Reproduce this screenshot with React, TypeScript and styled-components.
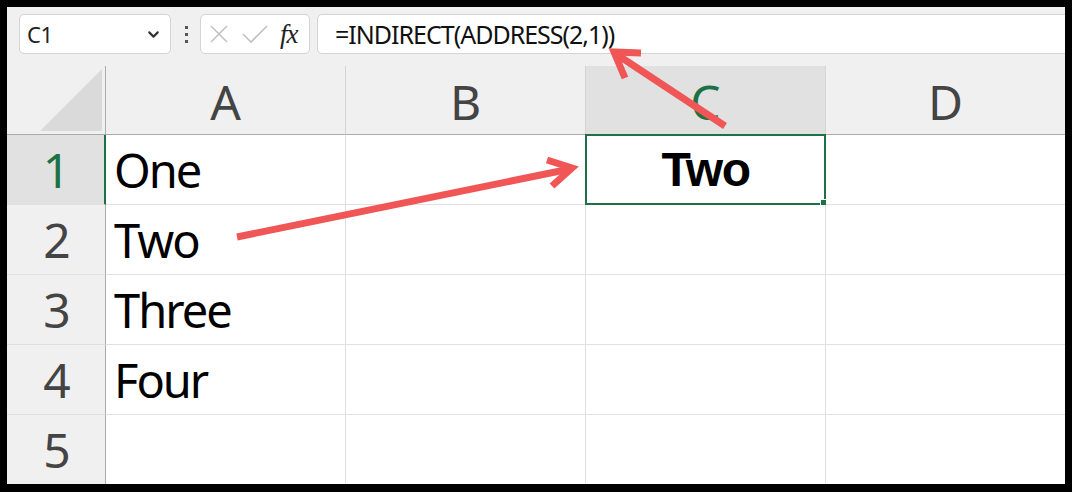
import styled, { createGlobalStyle } from 'styled-components';
import { ChevronDown } from 'lucide-react';

const GlobalStyle = createGlobalStyle`
  html, body {
    margin: 0;
    padding: 0;
    background: #000;
  }
  * {
    box-sizing: border-box;
  }
`;

const GREEN = '#1e7145';
const UI_FONT = `"Noto Sans", "Open Sans", sans-serif`;

const Frame = styled.div`
  position: relative;
  width: 1072px;
  height: 492px;
  padding: 7px 7px 8px 7px;
  background: #000;
  overflow: hidden;
  font-family: ${UI_FONT};
`;

const Sheet = styled.div`
  display: flex;
  flex-direction: column;
  width: 100%;
  height: 100%;
  background: #f0f0f0;
  overflow: hidden;
`;

const Toolbar = styled.div`
  display: flex;
  align-items: center;
  height: 59px;
  padding: 7px 0 12px 12px;
  flex-shrink: 0;
`;

const NameBox = styled.div`
  display: flex;
  align-items: center;
  justify-content: space-between;
  width: 152px;
  height: 40px;
  padding: 0 8px 0 7px;
  background: #fff;
  border: 1px solid #d4d4d4;
  border-radius: 5px;
  font-size: 22px;
  letter-spacing: -0.5px;
  color: #222;
`;

const Dots = styled.div`
  display: flex;
  flex-direction: column;
  gap: 4px;
  margin: 0 12px 0 14px;

  span {
    display: block;
    width: 3px;
    height: 3px;
    background: #555;
  }
`;

const FuncBox = styled.div`
  display: flex;
  align-items: center;
  width: 110px;
  height: 40px;
  padding: 0 0 0 8px;
  gap: 13px;
  background: #fff;
  border: 1px solid #d4d4d4;
  border-radius: 5px;
`;

const Fx = styled.span`
  font-family: "Liberation Serif", "DejaVu Serif", serif;
  font-style: italic;
  font-size: 27px;
  color: #222;
  margin-left: -1px;
  letter-spacing: -1px;
`;

const FormulaBar = styled.div`
  flex: 1;
  display: flex;
  align-items: center;
  height: 40px;
  margin-left: 7px;
  margin-right: -6px;
  padding-left: 17px;
  background: #fff;
  border: 1px solid #d4d4d4;
  border-radius: 5px;
  font-size: 25px;
  letter-spacing: -1px;
  color: #111;
`;

const Grid = styled.div`
  display: grid;
  grid-template-columns: 99px repeat(4, 240px);
  grid-template-rows: 69px repeat(5, 70px);
  flex: 1;
`;

const Corner = styled.div`
  position: relative;
  background: #f0f0f0;
  border-right: 1px solid #ababab;
  border-bottom: 1px solid #ababab;

  &::after {
    content: '';
    position: absolute;
    right: 3px;
    bottom: 3px;
    width: 62px;
    height: 62px;
    background: #dadada;
    clip-path: polygon(100% 0, 100% 100%, 0 100%);
  }
`;

const ColHead = styled.div<{ $active?: boolean }>`
  display: flex;
  align-items: center;
  justify-content: center;
  background: ${(p) => (p.$active ? '#e1e1e1' : '#f0f0f0')};
  color: ${(p) => (p.$active ? GREEN : '#444')};
  border-right: 1px solid #d4d4d4;
  border-bottom: ${(p) => (p.$active ? `1px solid ${GREEN}` : '1px solid #ababab')};
  font-size: 48px;
  padding-top: 2px;
`;

const RowHead = styled.div<{ $active?: boolean }>`
  display: flex;
  align-items: center;
  justify-content: center;
  background: ${(p) => (p.$active ? '#e1e1e1' : '#f0f0f0')};
  color: ${(p) => (p.$active ? GREEN : '#444')};
  border-right: ${(p) => (p.$active ? `2px solid ${GREEN}` : '1px solid #ababab')};
  border-bottom: 1px solid #e0e0e0;
  font-size: 48px;
  padding-left: 2px;
`;

const Cell = styled.div<{ $bold?: boolean }>`
  position: relative;
  display: flex;
  align-items: center;
  justify-content: ${(p) => (p.$bold ? 'center' : 'flex-start')};
  padding-left: ${(p) => (p.$bold ? '0' : '8px')};
  background: #fff;
  border-right: 1px solid #e1e1e1;
  border-bottom: 1px solid #e1e1e1;
  font-family: ${(p) => (p.$bold ? `"Liberation Sans", Arial, sans-serif` : UI_FONT)};
  font-weight: ${(p) => (p.$bold ? 700 : 400)};
  font-size: ${(p) => (p.$bold ? '48px' : '47px')};
  letter-spacing: ${(p) => (p.$bold ? '-1.5px' : '-2px')};
  color: #000;
`;

const Selection = styled.div`
  position: absolute;
  top: -1px;
  left: -1px;
  right: -1px;
  bottom: -1px;
  border: 2px solid ${GREEN};
  pointer-events: none;
`;

const FillHandle = styled.div`
  position: absolute;
  right: -4px;
  bottom: -4px;
  width: 6px;
  height: 6px;
  background: ${GREEN};
  border: 1px solid #fff;
  box-sizing: content-box;
`;

const Overlay = styled.svg`
  position: absolute;
  top: 0;
  left: 0;
  pointer-events: none;
`;

const columns = ['A', 'B', 'C', 'D'];
const rows: string[][] = [
  ['One', '', 'Two', ''],
  ['Two', '', '', ''],
  ['Three', '', '', ''],
  ['Four', '', '', ''],
  ['', '', '', ''],
];

const ARROW = '#f05656';

const App = () => {
  return (
    <>
      <GlobalStyle />
      <Frame>
        <Sheet>
          <Toolbar>
            <NameBox>
              <span>C1</span>
              <ChevronDown size={17} strokeWidth={3} color="#333" />
            </NameBox>
            <Dots>
              <span />
              <span />
              <span />
            </Dots>
            <FuncBox>
              <svg width="20" height="20" viewBox="0 0 20 20">
                <path d="M2 2 L18 18 M18 2 L2 18" stroke="#c2c2c2" strokeWidth="1.6" fill="none" />
              </svg>
              <svg width="26" height="20" viewBox="0 0 26 20">
                <path d="M1 10 L9 18 L25 2" stroke="#c2c2c2" strokeWidth="1.6" fill="none" />
              </svg>
              <Fx>fx</Fx>
            </FuncBox>
            <FormulaBar>=INDIRECT(ADDRESS(2,1))</FormulaBar>
          </Toolbar>
          <Grid>
            <Corner />
            {columns.map((c) => (
              <ColHead key={c} $active={c === 'C'}>
                {c}
              </ColHead>
            ))}
            {rows.map((row, r) => (
              <>
                <RowHead key={`h${r}`} $active={r === 0}>
                  {r + 1}
                </RowHead>
                {row.map((v, c) => {
                  const selected = r === 0 && c === 2;
                  return (
                    <Cell key={`${r}-${c}`} $bold={selected}>
                      {v}
                      {selected && (
                        <Selection>
                          <FillHandle />
                        </Selection>
                      )}
                    </Cell>
                  );
                })}
              </>
            ))}
          </Grid>
        </Sheet>
        <Overlay width="1072" height="492" viewBox="0 0 1072 492">
          <g stroke={ARROW} strokeWidth="7" fill="none" strokeLinejoin="miter">
            <line x1="237" y1="237" x2="570" y2="169" />
            <polyline points="547,160 572,168 552,186" />
            <line x1="725" y1="126" x2="616" y2="54" />
            <polyline points="641,53 614,52 625,78" />
          </g>
        </Overlay>
      </Frame>
    </>
  );
};

export default App;
